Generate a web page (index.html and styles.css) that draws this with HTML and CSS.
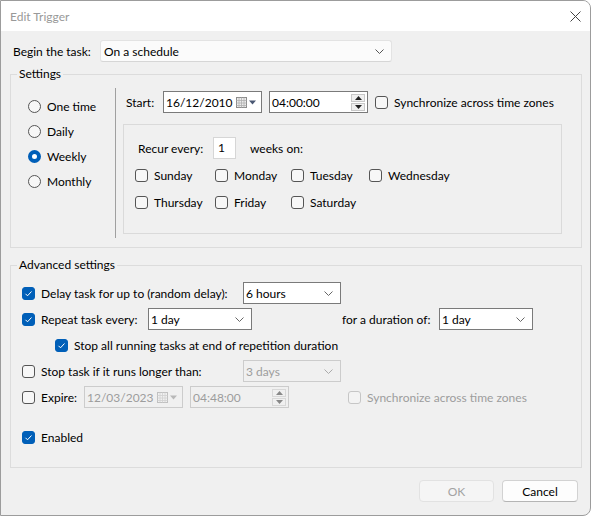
FILE: index.html
```html
<!DOCTYPE html>
<html lang="en">
<head>
  <meta charset="UTF-8" />
  <title>Edit Trigger</title>
  <link rel="stylesheet" href="styles.css">
</head>
<body>
<div class="window">

  <div class="titlebar">
    <span>Edit Trigger</span>
    <svg class="close" width="11" height="11" viewBox="0 0 11 11"><path d="M0.5 0.5l10 10M10.5 0.5l-10 10" stroke="#444" stroke-width="1"/></svg>
  </div>

  <div class="content">
    <div class="begin-row">
      <span class="begin-label">Begin the task:</span>
      <div class="combo flat begin-combo">
        <span>On a schedule</span>
        <svg class="chev" width="9" height="5" viewBox="0 0 9 5"><path d="M0.5 0.5l4 4 4-4" fill="none" stroke="#555"/></svg>
      </div>
    </div>

    <fieldset class="group">
      <legend>Settings</legend>
      <div class="settings-body">
        <div class="radios">
          <label class="radio"><span class="dot"></span>One time</label>
          <label class="radio"><span class="dot"></span>Daily</label>
          <label class="radio"><span class="dot on"></span>Weekly</label>
          <label class="radio"><span class="dot"></span>Monthly</label>
        </div>
        <div class="schedule">
          <div class="start-row">
            <span class="start-label">Start:</span>
            <div class="field">
              <span>16/12/2010</span>
              <svg class="cal" width="20" height="11" viewBox="0 0 20 11">
                <rect x="0.5" y="0.5" width="10" height="10" fill="#ececec" stroke="#8c8c8c"/>
                <path d="M0.5 3.5h10M0.5 6h10M0.5 8.5h10M3 0.5v10M5.5 0.5v10M8 0.5v10" stroke="#b0b0b0" stroke-width="0.8"/>
                <path d="M13 3.5h7l-3.5 4z" fill="#4a5773"/>
              </svg>
            </div>
            <div class="field time">
              <span>04:00:00</span>
              <div class="spin">
                <span class="spin-btn"><svg width="7" height="4" viewBox="0 0 7 4"><path d="M0 4h7L3.5 0z" fill="#222"/></svg></span>
                <span class="spin-btn"><svg width="7" height="4" viewBox="0 0 7 4"><path d="M0 0h7L3.5 4z" fill="#222"/></svg></span>
              </div>
            </div>
            <label class="check"><span class="box"></span>Synchronize across time zones</label>
          </div>

          <div class="recur-box">
            <div class="recur-row">
              <span class="recur-label">Recur every:</span>
              <div class="num">1</div>
              <span class="weeks">weeks on:</span>
            </div>
            <div class="days">
              <label class="check"><span class="box"></span>Sunday</label>
              <label class="check"><span class="box"></span>Monday</label>
              <label class="check"><span class="box"></span>Tuesday</label>
              <label class="check"><span class="box"></span>Wednesday</label>
              <label class="check"><span class="box"></span>Thursday</label>
              <label class="check"><span class="box"></span>Friday</label>
              <label class="check"><span class="box"></span>Saturday</label>
            </div>
          </div>
        </div>
      </div>
    </fieldset>

    <fieldset class="group advanced">
      <legend>Advanced settings</legend>
      <div class="adv-body">
        <div class="row">
          <label class="check w-delay"><span class="box on"><svg width="11" height="11" viewBox="0 0 11 11"><path d="M2.5 5.8l2 2 4-4.3" fill="none" stroke="#fff" stroke-width="1"/></svg></span>Delay task for up to (random delay):</label>
          <div class="combo classic w-98">
            <span>6 hours</span>
            <svg class="chev" width="9" height="5" viewBox="0 0 9 5"><path d="M0.5 0.5l4 4 4-4" fill="none" stroke="#666"/></svg>
          </div>
        </div>
        <div class="row">
          <label class="check w-repeat"><span class="box on"><svg width="11" height="11" viewBox="0 0 11 11"><path d="M2.5 5.8l2 2 4-4.3" fill="none" stroke="#fff" stroke-width="1"/></svg></span>Repeat task every:</label>
          <div class="combo classic w-104">
            <span>1 day</span>
            <svg class="chev" width="9" height="5" viewBox="0 0 9 5"><path d="M0.5 0.5l4 4 4-4" fill="none" stroke="#666"/></svg>
          </div>
          <span class="duration-label">for a duration of:</span>
          <div class="combo classic w-94">
            <span>1 day</span>
            <svg class="chev" width="9" height="5" viewBox="0 0 9 5"><path d="M0.5 0.5l4 4 4-4" fill="none" stroke="#666"/></svg>
          </div>
        </div>
        <div class="row indent">
          <label class="check"><span class="box on"><svg width="11" height="11" viewBox="0 0 11 11"><path d="M2.5 5.8l2 2 4-4.3" fill="none" stroke="#fff" stroke-width="1"/></svg></span>Stop all running tasks at end of repetition duration</label>
        </div>
        <div class="row">
          <label class="check w-delay"><span class="box"></span>Stop task if it runs longer than:</label>
          <div class="combo disabled w-98">
            <span>3 days</span>
            <svg class="chev" width="9" height="5" viewBox="0 0 9 5"><path d="M0.5 0.5l4 4 4-4" fill="none" stroke="#aaa"/></svg>
          </div>
        </div>
        <div class="row">
          <label class="check w-expire"><span class="box"></span>Expire:</label>
          <div class="field disabled">
            <span>12/03/2023</span>
            <svg class="cal" width="20" height="11" viewBox="0 0 20 11">
              <rect x="0.5" y="0.5" width="10" height="10" fill="#f0f0f0" stroke="#c0c0c0"/>
              <path d="M0.5 3.5h10M0.5 6h10M0.5 8.5h10M3 0.5v10M5.5 0.5v10M8 0.5v10" stroke="#d0d0d0" stroke-width="0.8"/>
              <path d="M13 3.5h7l-3.5 4z" fill="#b8b8b8"/>
            </svg>
          </div>
          <div class="field time disabled">
            <span>04:48:00</span>
            <div class="spin">
              <span class="spin-btn"><svg width="7" height="4" viewBox="0 0 7 4"><path d="M0 4h7L3.5 0z" fill="#888"/></svg></span>
              <span class="spin-btn"><svg width="7" height="4" viewBox="0 0 7 4"><path d="M0 0h7L3.5 4z" fill="#888"/></svg></span>
            </div>
          </div>
          <label class="check disabled sync-off"><span class="box"></span>Synchronize across time zones</label>
        </div>
        <div class="row enabled">
          <label class="check"><span class="box on"><svg width="11" height="11" viewBox="0 0 11 11"><path d="M2.5 5.8l2 2 4-4.3" fill="none" stroke="#fff" stroke-width="1"/></svg></span>Enabled</label>
        </div>
      </div>
    </fieldset>

    <div class="buttons">
      <button class="btn ok" disabled>OK</button>
      <button class="btn cancel">Cancel</button>
    </div>
  </div>

</div>
</body>
</html>
```

FILE: styles.css
```css
* { margin: 0; padding: 0; box-sizing: border-box; }
body {
  font-family: "Segoe UI", Lato, sans-serif;
  font-size: 12px;
  color: #000;
  background: #fff;
}
.window {
  width: 591px;
  height: 516px;
  border: 1px solid #9c9c9c;
  border-radius: 0 8px 8px 0;
  background: #f0f0f0;
  overflow: hidden;
}
.titlebar {
  height: 30px;
  background: #fff;
  color: #999;
  display: flex;
  align-items: center;
  justify-content: space-between;
  padding: 0 9px;
}
.content {
  padding: 9px 8px 0 9px;
}

/* begin row */
.begin-row {
  display: flex;
  align-items: center;
  height: 22px;
  padding-left: 3px;
}
.begin-label { width: 87px; }
.begin-combo { width: 292px; }

/* combos and fields */
.combo, .field {
  height: 22px;
  display: flex;
  align-items: center;
  justify-content: space-between;
  background: #fff;
  flex-shrink: 0;
}
.combo.flat {
  background: #fbfbfb;
  border: 1px solid #e3e3e3;
  border-bottom-color: #d6d6d6;
  border-radius: 3px;
  padding: 0 7px 0 3px;
}
.combo.classic {
  border: 1px solid #7a7a7a;
  padding: 0 7px 0 2px;
}
.combo.disabled {
  border: 1px solid #cccccc;
  background: #f0f0f0;
  color: #9d9d9d;
  padding: 0 7px 0 2px;
}
.w-98 { width: 98px; }
.w-104 { width: 104px; }
.w-94 { width: 94px; }
.field {
  width: 99px;
  border: 1px solid #7a7a7a;
  padding: 0 5px 0 2px;
}
.field.time { padding-right: 2px; }
.field.disabled {
  border-color: #cccccc;
  background: #f0f0f0;
  color: #9d9d9d;
}
.cal { margin-top: 1px; }
.spin {
  display: flex;
  flex-direction: column;
  gap: 1px;
}
.spin-btn {
  width: 14px;
  height: 8px;
  background: #f0f0f0;
  border: 1px solid #c8c8c8;
  display: flex;
  align-items: center;
  justify-content: center;
}
.field.disabled .spin-btn { border-color: #d8d8d8; }

/* groups */
.group {
  border: 1px solid #dcdcdc;
  margin-top: 4px;
}
.group.advanced { margin-top: 9px; }
.group legend {
  margin-left: 6px;
  padding: 0 2px;
  line-height: 16px;
}
.settings-body {
  display: flex;
  padding: 6px 0 9px 0;
}
.radios {
  width: 104px;
  padding: 6px 0 0 17px;
}
.radio {
  display: flex;
  align-items: center;
  gap: 6px;
  height: 25px;
}
.dot {
  width: 13px;
  height: 13px;
  border-radius: 50%;
  border: 1px solid #555;
  background: #f7f7f7;
}
.dot.on {
  border: 4px solid #005fb8;
  background: #fff;
}
.schedule {
  border-left: 1px solid #a0a0a0;
  height: 150px;
  padding: 3px 0 0 7px;
}
.start-row {
  display: flex;
  align-items: center;
  gap: 7px;
  height: 22px;
}
.start-label {
  width: 37px;
  margin-left: 3px;
  margin-right: -7px;
}

/* checkboxes */
.check {
  display: flex;
  align-items: center;
  gap: 6px;
  white-space: nowrap;
  flex-shrink: 0;
}
.box {
  width: 13px;
  height: 13px;
  border: 1px solid #555;
  border-radius: 3px;
  background: #f7f7f7;
  display: flex;
  align-items: center;
  justify-content: center;
  flex-shrink: 0;
}
.box.on {
  background: #005fb8;
  border-color: #005fb8;
}
.check.disabled { color: #9d9d9d; }
.check.disabled .box {
  border-color: #c6c6c6;
  background: #f3f3f3;
}

/* recurrence */
.recur-box {
  margin-top: 11px;
  width: 439px;
  height: 110px;
  border: 1px solid #dadada;
  padding: 12px 0 0 11px;
}
.recur-row {
  display: flex;
  align-items: center;
  height: 22px;
  padding-left: 3px;
}
.recur-label { width: 75px; }
.num {
  width: 23px;
  height: 22px;
  background: #fff;
  border: 1px solid #d6d6d6;
  padding: 2px 0 0 4px;
}
.weeks { margin-left: 14px; }
.days {
  display: grid;
  grid-template-columns: 80px 76px 78px auto;
  grid-auto-rows: 20px;
  row-gap: 7px;
  margin-top: 6px;
}

/* advanced */
.adv-body {
  display: flex;
  flex-direction: column;
  gap: 4px;
  padding: 9px 0 19px 11px;
}
.row {
  display: flex;
  align-items: center;
  height: 22px;
}
.w-delay { width: 221px; }
.w-repeat { width: 126px; }
.w-expire { width: 62px; }
.duration-label {
  margin-left: 90px;
  width: 97px;
}
.indent { padding-left: 33px; }
.row .field.time { margin-left: 7px; }
.sync-off { margin-left: 59px; }
.enabled { margin-top: 14px; }

/* buttons */
.buttons {
  display: flex;
  justify-content: flex-end;
  gap: 8px;
  margin-top: 12px;
  padding-right: 4px;
}
.btn {
  height: 22px;
  font: inherit;
  border-radius: 4px;
}
.btn.ok {
  width: 75px;
  background: #f5f5f5;
  border: 1px solid #e2e2e2;
  color: #a3a3a3;
}
.btn.cancel {
  width: 76px;
  background: #fdfdfd;
  border: 1px solid #d2d2d2;
  border-bottom-color: #b5b5b5;
  color: #000;
}
```
